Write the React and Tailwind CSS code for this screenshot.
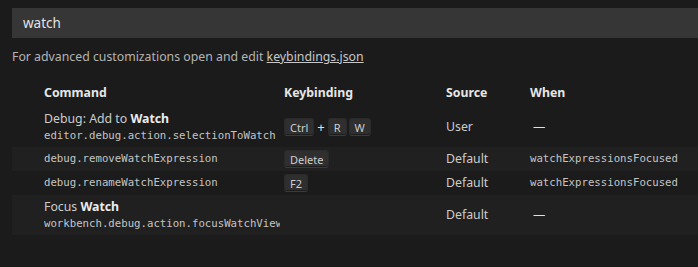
import React from 'react';

const sans = { fontFamily: '"Segoe UI", "Noto Sans", sans-serif' };

function Key({ children }) {
    return (
        <span className="inline-flex items-center h-[18px] px-[5px] rounded-[3px] bg-[#2f2f2f] border border-[#2a2a2a] border-b-[#3a3a3a] shadow-[inset_0_-1px_0_rgba(0,0,0,0.36)] text-[11px] text-[#cccccc] leading-none">
            {children}
        </span>
    );
}

const Mono = ({ children, className = '' }) => (
    <span className={`font-['DejaVu_Sans_Mono',monospace] text-[10.7px] leading-[16px] text-[#c4c4c4] whitespace-nowrap ${className}`}>{children}</span>
);

const Dash = () => <span className="pl-[3px] text-[#e0e0e0]">—</span>;

function Title({ pre, hl }) {
    return (
        <div className="text-[12.3px] text-[#cccccc] leading-[18px] whitespace-nowrap">
            {pre}<span className="font-bold text-[#ececec]">{hl}</span>
        </div>
    );
}

const rows = [
    {
        h: 'h-10',
        stripe: false,
        command: (
            <div className="flex flex-col">
                <Title pre="Debug: Add to " hl="Watch" />
                <Mono>editor.debug.action.selectionToWatch</Mono>
            </div>
        ),
        keys: (
            <div className="flex items-center gap-[2px]">
                <Key>Ctrl</Key>
                <span className="text-[13px] text-[#e0e0e0] px-[1px]">+</span>
                <Key>R</Key>
                <Key>W</Key>
            </div>
        ),
        source: 'User',
        when: <Dash />,
    },
    {
        h: 'h-6',
        stripe: true,
        command: <Mono>debug.removeWatchExpression</Mono>,
        keys: <Key>Delete</Key>,
        source: 'Default',
        when: <Mono>watchExpressionsFocused</Mono>,
    },
    {
        h: 'h-6',
        stripe: false,
        command: <Mono>debug.renameWatchExpression</Mono>,
        keys: <Key>F2</Key>,
        source: 'Default',
        when: <Mono>watchExpressionsFocused</Mono>,
    },
    {
        h: 'h-10',
        stripe: true,
        command: (
            <div className="flex flex-col overflow-hidden">
                <Title pre="Focus " hl="Watch" />
                <Mono>workbench.debug.action.focusWatchView</Mono>
            </div>
        ),
        keys: null,
        source: 'Default',
        when: <Dash />,
    },
];

export default function App() {
    return (
        <div className="w-[698px] h-[267px] bg-[#1b1b1b] overflow-hidden" style={sans}>
            <div className="pl-3 pt-2">
                <div className="h-[30px] bg-[#363636] flex items-center pl-[11px] text-[13.5px] text-[#e2e2e2]">
                    watch
                </div>
                <div className="mt-[10px] text-[12.3px] text-[#b4b4b4] leading-[18px]">
                    For advanced customizations open and edit{' '}
                    <span className="underline text-[#c8c8c8]">keybindings.json</span>
                </div>
                <div className="mt-[13px] h-[28px] flex items-center text-[12.3px] font-bold text-[#e6e6e6]">
                    <div className="w-8" />
                    <div className="w-[240px]">Command</div>
                    <div className="w-[162px]">Keybinding</div>
                    <div className="w-[84px]">Source</div>
                    <div>When</div>
                </div>
                {rows.map((r, i) => (
                    <div key={i} className={`${r.h} flex items-center leading-[18px] ${r.stripe ? 'bg-[#202020]' : ''}`}>
                        <div className="w-8 shrink-0" />
                        <div className="w-[240px] shrink-0 overflow-hidden pr-1 flex items-center">{r.command}</div>
                        <div className="w-[162px] shrink-0 flex items-center">{r.keys}</div>
                        <div className="w-[84px] shrink-0 text-[12.3px] text-[#cccccc]">{r.source}</div>
                        <div className="text-[12.3px] flex items-center">{r.when}</div>
                    </div>
                ))}
            </div>
        </div>
    );
}
